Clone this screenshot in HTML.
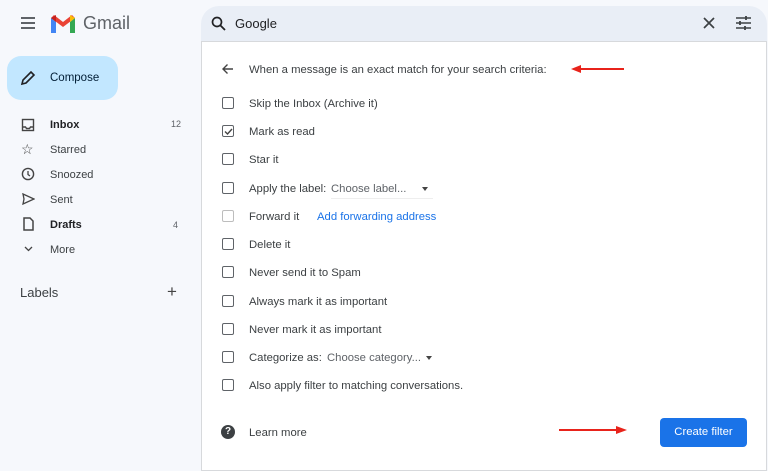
<!DOCTYPE html>
<html><head><meta charset="utf-8"><style>
*{margin:0;padding:0;box-sizing:border-box}
body{width:768px;height:466px;overflow:hidden;background:#f6f8fc;font-family:"Liberation Sans",sans-serif;color:#202124;position:relative}
.a{position:absolute}
.nav{position:absolute;left:50px;font-size:11px;color:#3c4043;margin-top:1px}
.cnt{position:absolute;left:171px;font-size:9px;color:#5f6368}
.cb{position:absolute;left:222px;width:12px;height:12px;border:1.6px solid #5f6368;border-radius:2px}
.lb{position:absolute;left:249px;font-size:11.3px;color:#3c4043;margin-top:1px}
</style></head><body>
<div class="a" style="left:21px;top:17px;width:14px;height:2px;background:#5f6368"></div>
<div class="a" style="left:21px;top:22px;width:14px;height:2px;background:#5f6368"></div>
<div class="a" style="left:21px;top:27px;width:14px;height:2px;background:#5f6368"></div>
<svg class="a" style="left:51px;top:15px" width="24" height="18" viewBox="0 0 24 18">
<path d="M0 3v15h5V7z" fill="#4285f4"/><path d="M19 7v11h5V3z" fill="#34a853"/>
<path d="M0 3l12 9 12-9-3-3-9 7-9-7z" fill="#ea4335"/><path d="M19 0l5 3v0l-5 4z" fill="#fbbc04"/><path d="M0 3l5 4V0z" fill="#c5221f"/></svg>
<div class="a" style="left:83px;top:13px;font-size:18px;color:#5f6368">Gmail</div>
<div class="a" style="left:7px;top:56px;width:111px;height:44px;background:#c2e7ff;border-radius:14px"></div>
<svg class="a" style="left:20px;top:70px" width="16" height="16" viewBox="0 0 16 16"><path d="M2 14l1-4 8-8 3 3-8 8z" fill="none" stroke="#202124" stroke-width="1.6"/></svg>
<div class="a" style="left:50px;top:72px;font-size:11.5px;color:#001d35">Compose</div>
<svg class="a" style="left:21px;top:118px" width="14" height="14" viewBox="0 0 14 14"><rect x="1.5" y="1.5" width="11" height="11" fill="none" stroke="#444" stroke-width="1.4"/><path d="M1.5 9h3l1 1.5h3l1-1.5h3" fill="none" stroke="#444" stroke-width="1.4"/></svg>
<div class="nav" style="top:118px;font-weight:bold;color:#202124">Inbox</div><div class="cnt" style="top:119px">12</div>
<div class="a" style="left:21px;top:141px;font-size:14px;color:#444">☆</div>
<div class="nav" style="top:143px">Starred</div>
<svg class="a" style="left:21px;top:167px" width="14" height="14" viewBox="0 0 14 14"><circle cx="7" cy="7" r="5.6" fill="none" stroke="#444" stroke-width="1.4"/><path d="M7 4v3.5l2 1.5" fill="none" stroke="#444" stroke-width="1.3"/></svg>
<div class="nav" style="top:168px">Snoozed</div>
<svg class="a" style="left:22px;top:193px" width="13" height="12" viewBox="0 0 13 12"><path d="M1 1l11 5-11 5 1-5z" fill="none" stroke="#444" stroke-width="1.3"/></svg>
<div class="nav" style="top:193px">Sent</div>
<svg class="a" style="left:23px;top:217px" width="11" height="14" viewBox="0 0 11 14"><path d="M1 1h6l3 3v9H1z" fill="none" stroke="#444" stroke-width="1.5"/></svg>
<div class="nav" style="top:218px;font-weight:bold;color:#202124">Drafts</div><div class="cnt" style="top:220px;left:173px">4</div>
<svg class="a" style="left:24px;top:246px" width="9" height="6" viewBox="0 0 9 6"><path d="M1 1l3.5 3.5L8 1" fill="none" stroke="#444" stroke-width="1.3"/></svg>
<div class="nav" style="top:243px">More</div>
<div class="a" style="left:20px;top:285px;font-size:13px;color:#3c4043">Labels</div>
<div class="a" style="left:167px;top:282px;font-size:17px;color:#444">+</div>
<div class="a" style="left:201px;top:6px;width:566px;height:36px;background:#e9eef6;border-radius:18px 18px 0 0"></div>
<svg class="a" style="left:211px;top:16px" width="15" height="15" viewBox="0 0 15 15"><circle cx="6" cy="6" r="4.5" fill="none" stroke="#202124" stroke-width="1.7"/><path d="M9.5 9.5l4.5 4.5" stroke="#202124" stroke-width="1.8"/></svg>
<div class="a" style="left:235px;top:16px;font-size:13px;color:#202124">Google</div>
<svg class="a" style="left:703px;top:17px" width="12" height="12" viewBox="0 0 12 12"><path d="M1 1l10 10M11 1L1 11" stroke="#3c4043" stroke-width="1.7"/></svg>
<svg class="a" style="left:736px;top:16px" width="15" height="14" viewBox="0 0 15 14"><path d="M0 2h15M0 7h15M0 12h15" stroke="#3c4043" stroke-width="1.6"/><path d="M10 0v4M4 5v4M9 10v4" stroke="#3c4043" stroke-width="1.8"/></svg>
<div class="a" style="left:201px;top:41px;width:566px;height:430px;background:#fff;border:1px solid #d7d9dc"></div>
<svg class="a" style="left:221px;top:63px" width="13" height="12" viewBox="0 0 13 12"><path d="M12 6H2M6.5 1.5L2 6l4.5 4.5" fill="none" stroke="#444" stroke-width="1.4"/></svg>
<div class="lb" style="top:63px">When a message is an exact match for your search criteria:</div>
<svg class="a" style="left:571px;top:64px" width="53" height="10" viewBox="0 0 53 10"><path d="M8 5h45" stroke="#e8231b" stroke-width="2"/><path d="M0 5l10-4v8z" fill="#e8231b"/></svg>
<div class="cb" style="top:97px"></div><div class="lb" style="top:97px">Skip the Inbox (Archive it)</div>
<div class="cb" style="top:125px"></div><svg class="a" style="left:224px;top:128px" width="9" height="7" viewBox="0 0 9 7"><path d="M1 3.5l2.5 2.5L8 1" fill="none" stroke="#444" stroke-width="1.4"/></svg><div class="lb" style="top:125px">Mark as read</div>
<div class="cb" style="top:153px"></div><div class="lb" style="top:153px">Star it</div>
<div class="cb" style="top:182px"></div><div class="lb" style="top:182px">Apply the label:</div>
<div class="lb" style="left:331px;top:182px;color:#5f6368">Choose label...</div>
<div class="a" style="left:422px;top:187px;border:3px solid transparent;border-top:4px solid #444"></div>
<div class="a" style="left:331px;top:198px;width:102px;height:1px;background:#eee"></div>
<div class="cb" style="top:210px;border-color:#bdbdbd;border-width:1.2px"></div><div class="lb" style="top:210px">Forward it</div>
<div class="lb" style="left:317px;top:210px;color:#1a73e8">Add forwarding address</div>
<div class="cb" style="top:238px"></div><div class="lb" style="top:238px">Delete it</div>
<div class="cb" style="top:266px"></div><div class="lb" style="top:266px">Never send it to Spam</div>
<div class="cb" style="top:295px"></div><div class="lb" style="top:295px">Always mark it as important</div>
<div class="cb" style="top:323px"></div><div class="lb" style="top:323px">Never mark it as important</div>
<div class="cb" style="top:351px"></div><div class="lb" style="top:351px">Categorize as:</div>
<div class="lb" style="left:327px;top:351px;color:#5f6368">Choose category...</div>
<div class="a" style="left:426px;top:356px;border:3px solid transparent;border-top:4px solid #444"></div>
<div class="cb" style="top:379px"></div><div class="lb" style="top:379px">Also apply filter to matching conversations.</div>
<div class="a" style="left:221px;top:425px;width:14px;height:14px;border-radius:50%;background:#3c4043;color:#fff;font-size:10px;font-weight:bold;text-align:center;line-height:14px">?</div>
<div class="lb" style="top:426px">Learn more</div>
<svg class="a" style="left:559px;top:425px" width="68" height="10" viewBox="0 0 68 10"><path d="M0 5h58" stroke="#e8231b" stroke-width="2"/><path d="M68 5l-11-4v8z" fill="#e8231b"/></svg>
<div class="a" style="left:660px;top:418px;width:87px;height:29px;background:#1a73e8;border-radius:4px;color:#fff;font-size:11.3px;text-align:center;line-height:29px">Create filter</div>
</body></html>
